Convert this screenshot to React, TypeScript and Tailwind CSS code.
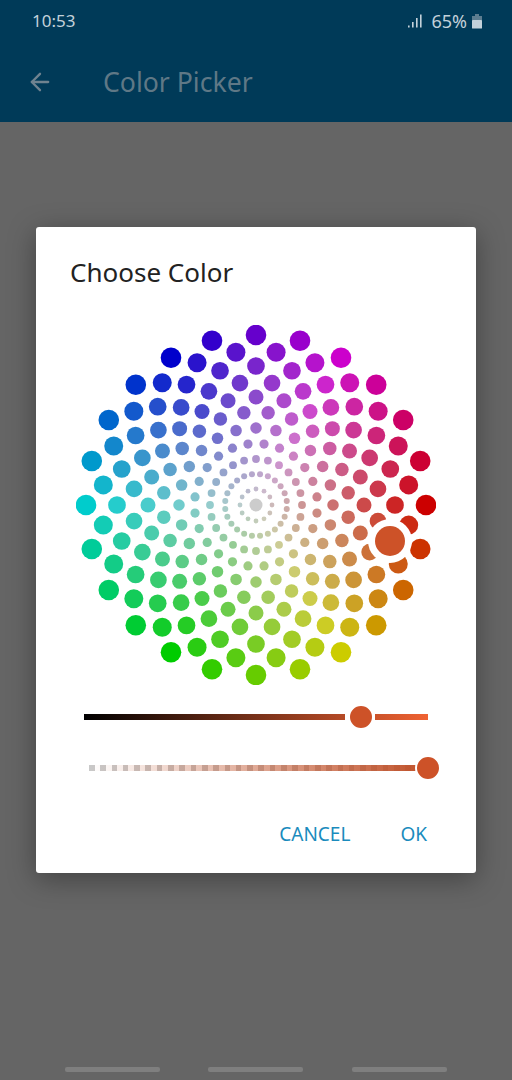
import React from 'react';
import { ArrowLeft } from 'lucide-react';

const rings = [
  { r: 170, d: 20.6, offset: 0, count: 24 },
  { r: 154, d: 19, offset: 7.5, count: 24 },
  { r: 139, d: 17.7, offset: 0, count: 24 },
  { r: 123, d: 16.7, offset: 7.5, count: 24 },
  { r: 108, d: 15, offset: 0, count: 24 },
  { r: 93, d: 13.5, offset: 7.5, count: 24 },
  { r: 77, d: 11.5, offset: 0, count: 24 },
  { r: 61.5, d: 9.2, offset: 7.5, count: 24 },
  { r: 46, d: 7.8, offset: 0, count: 24 },
  { r: 31, d: 6, offset: 7.5, count: 24 },
  { r: 16, d: 4.8, offset: 0, count: 12 },
];

const hsv = (h: number, s: number, v: number) => {
  const f = (n: number) => {
    const k = (n + h / 60) % 6;
    return Math.round(255 * (v - v * s * Math.max(0, Math.min(k, 4 - k, 1))));
  };
  return `rgb(${f(5)},${f(3)},${f(1)})`;
};

const ColorWheel = () => {
  const c = 180;
  const dots: React.ReactElement[] = [];
  rings.forEach((ring, i) => {
    for (let n = 0; n < ring.count; n++) {
      const hue = ring.offset + (n * 360) / ring.count;
      const a = (hue * Math.PI) / 180;
      dots.push(
        <circle
          key={`${i}-${n}`}
          cx={c + ring.r * Math.cos(a)}
          cy={c + ring.r * Math.sin(a)}
          r={ring.d / 2}
          fill={hsv(hue, ring.r / 170, 0.8)}
        />
      );
    }
  });
  return (
    <svg width="360" height="360" viewBox="0 0 360 360">
      {dots}
      <circle cx={c} cy={c} r={6.5} fill="#cccccc" />
      <circle cx={314} cy={216} r={22} fill="#ffffff" />
      <circle cx={314} cy={216} r={15} fill="#cd5228" />
    </svg>
  );
};

const SliderThumb = ({ className }: { className: string }) => (
  <div className={`absolute top-1/2 h-[26px] w-[26px] -translate-x-1/2 -translate-y-1/2 rounded-full border-2 border-white bg-[#cd5228] ${className}`} />
);

export default function App() {
  return (
    <div className="flex h-[1080px] w-[512px] flex-col overflow-hidden bg-[#656565] font-['Noto_Sans',sans-serif]">
      {/* Status bar + toolbar */}
      <div className="h-[122px] bg-[#003a58]">
        <div className="flex h-[42px] items-center pl-[32px] pr-[30px] text-[17px] text-[#c3d1da]">
          <span>10:53</span>
          <div className="ml-auto flex items-center">
            <svg width="14" height="14" viewBox="0 0 14 14" className="mr-[9px]">
              <rect x="0" y="11.5" width="1.6" height="2" fill="#c3d1da" />
              <rect x="4" y="8" width="1.6" height="5.5" fill="#c3d1da" />
              <rect x="8" y="4" width="1.6" height="9.5" fill="#c3d1da" />
              <rect x="12" y="0.5" width="1.6" height="13" fill="#c3d1da" />
            </svg>
            <span className="text-[18px]">65%</span>
            <svg width="10" height="15" viewBox="0 0 10 15" className="ml-[5px]">
              <rect x="3" y="0" width="4" height="2" fill="#5c7d90" />
              <rect x="0" y="2" width="10" height="4" fill="#5c7d90" />
              <rect x="0" y="6" width="10" height="8.5" rx="0.5" fill="#c3d1da" />
            </svg>
          </div>
        </div>
        <div className="flex h-[80px] items-center pl-[26px] pb-[1px] text-[#5f7886]">
          <ArrowLeft size={28} strokeWidth={2} className="text-[#6f8390]" />
          <span className="ml-[49px] mt-[3px] text-[26.6px]">Color Picker</span>
        </div>
      </div>

      {/* Dialog */}
      <div className="mx-[36px] mt-[105px] h-[646px] rounded-[3px] bg-white shadow-[0_6px_28px_rgba(0,0,0,0.35)]">
        <div className="pl-[34px] pt-[26px] text-[26px] leading-[38px] text-[#222222]">Choose Color</div>
        <div className="mt-[34px] flex justify-center">
          <ColorWheel />
        </div>
        <div className="relative ml-[48px] mt-[29px] h-[6px] w-[344px] bg-[linear-gradient(to_right,#000000,#f06232)]">
          <div className="absolute left-[261px] top-0 h-full w-[30px] bg-white" />
          <SliderThumb className="left-[277px]" />
        </div>
        <div className="relative ml-[53px] mt-[45px] h-[6px] w-[340px] bg-[repeating-linear-gradient(to_right,#c9c9c9_0,#c9c9c9_5.6px,#ffffff_5.6px,#ffffff_11.3px)]">
          <div className="h-full w-full bg-[linear-gradient(to_right,rgba(192,80,40,0),#c05028)]" />
          <SliderThumb className="left-[339px]" />
        </div>
        <div className="mt-[49px] flex justify-end pr-[49px] text-[19px] leading-[28px] text-[#1a8bbd]">
          <span>CANCEL</span>
          <span className="ml-[50px]">OK</span>
        </div>
      </div>

      {/* Nav bar */}
      <div className="mt-auto flex pb-[8px] pl-[65px]">
        <div className="h-[5px] w-[95px] rounded-[2px] bg-[#7f7f7f]" />
        <div className="ml-[48px] h-[5px] w-[95px] rounded-[2px] bg-[#7f7f7f]" />
        <div className="ml-[49px] h-[5px] w-[95px] rounded-[2px] bg-[#7f7f7f]" />
      </div>
    </div>
  );
}
